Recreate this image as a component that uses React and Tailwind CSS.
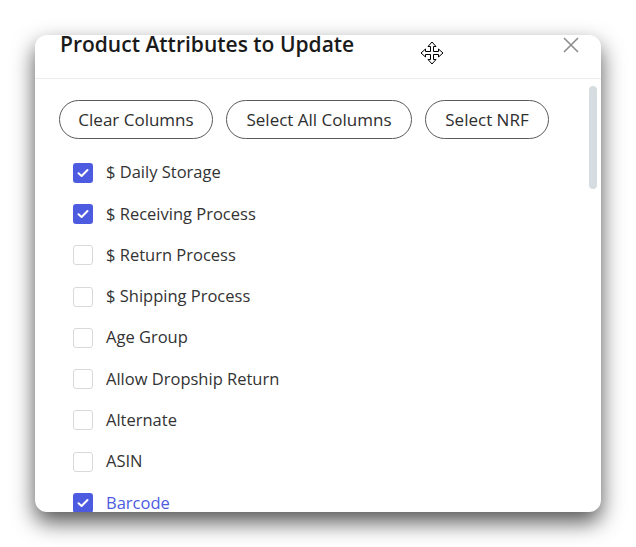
import React from "react";

const items = [
  { label: "$ Daily Storage", checked: true },
  { label: "$ Receiving Process", checked: true },
  { label: "$ Return Process", checked: false },
  { label: "$ Shipping Process", checked: false },
  { label: "Age Group", checked: false },
  { label: "Allow Dropship Return", checked: false },
  { label: "Alternate", checked: false },
  { label: "ASIN", checked: false },
  { label: "Barcode", checked: true, active: true },
];

function Check({ checked }) {
  if (checked) {
    return (
      <span className="flex h-[20px] w-[20px] shrink-0 items-center justify-center rounded-[3px] bg-[#4c5be0]">
        <svg width="12" height="10" viewBox="0 0 12 10" fill="none">
          <path d="M1.5 5.2 L4.6 8 L10.5 2" stroke="white" strokeWidth="2" strokeLinecap="round" strokeLinejoin="round" />
        </svg>
      </span>
    );
  }
  return <span className="h-[20px] w-[20px] shrink-0 rounded-[3px] border border-[#d9d9d9] bg-white" />;
}

function MoveCursor() {
  return (
    <svg width="24" height="24" viewBox="0 0 24 24">
      <path
        d="M12 1 L16 5.5 L13.5 5.5 L13.5 10.5 L18.5 10.5 L18.5 8 L23 12 L18.5 16 L18.5 13.5 L13.5 13.5 L13.5 18.5 L16 18.5 L12 23 L8 18.5 L10.5 18.5 L10.5 13.5 L5.5 13.5 L5.5 16 L1 12 L5.5 8 L5.5 10.5 L10.5 10.5 L10.5 5.5 L8 5.5 Z"
        fill="white"
        stroke="black"
        strokeWidth="1"
        strokeLinejoin="miter"
      />
    </svg>
  );
}

export default function App() {
  return (
    <div className="h-[547px] w-[636px] overflow-hidden bg-white pl-[35px] pt-[35px]" style={{ fontFamily: '"Open Sans", "Noto Sans", sans-serif' }}>
      <div className="relative flex h-[477px] w-[566px] flex-col overflow-hidden rounded-[12px] bg-white shadow-[0_10px_22px_rgba(0,0,0,0.68)]">
        <div className="relative h-[44px] shrink-0 overflow-hidden border-b border-[#ececec]">
          <div className="absolute left-[25px] top-[-6px] text-[21px] font-semibold leading-[30px] text-[#1a1a1a]">
            Product Attributes to Update
          </div>
          <div className="absolute left-[385px] top-[6px]">
            <MoveCursor />
          </div>
          <svg className="absolute left-[528px] top-[2px]" width="16" height="16" viewBox="0 0 16 16">
            <path d="M1 1 L15 15 M15 1 L1 15" stroke="#8c8c8c" strokeWidth="1.6" />
          </svg>
        </div>
        <div className="relative flex-1 overflow-hidden">
          <div className="absolute right-[4px] top-[7px] h-[103px] w-[8px] rounded-full bg-[#d6dde1]" />
          <div className="flex gap-[13px] pl-[24px] pt-[21px]">
            <button className="h-[39px] w-[154px] rounded-full border border-[#5a5a5a] text-[17px] text-[#2e2e2e]">Clear Columns</button>
            <button className="h-[39px] w-[186px] rounded-full border border-[#5a5a5a] text-[17px] text-[#2e2e2e]">Select All Columns</button>
            <button className="h-[39px] w-[124px] rounded-full border border-[#5a5a5a] text-[17px] text-[#2e2e2e]">Select NRF</button>
          </div>
          <div className="flex flex-col pl-[38px] pt-[13px]">
            {items.map((it) => (
              <div key={it.label} className="flex h-[41.3px] items-center gap-[13px]">
                <Check checked={it.checked} />
                <span className={"text-[16.5px] " + (it.active ? "text-[#4c5be0]" : "text-[#333333]")}>{it.label}</span>
              </div>
            ))}
          </div>
        </div>
      </div>
    </div>
  );
}
